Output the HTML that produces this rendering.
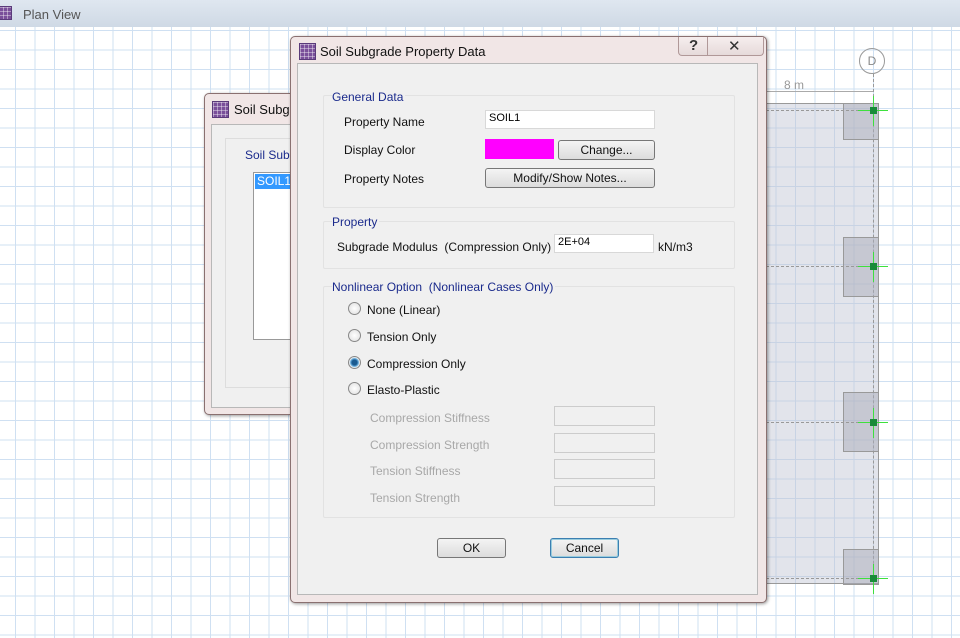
<!DOCTYPE html>
<html><head><meta charset="utf-8"><style>
*{margin:0;padding:0;box-sizing:border-box}
body{width:960px;height:638px;overflow:hidden;position:relative;font-family:"Liberation Sans",sans-serif;font-size:12px;background:#fff}
.grid{position:absolute;left:0;top:27px;width:960px;height:611px;
background-image:linear-gradient(to right,#cfe0f2 1px,transparent 1px),linear-gradient(to bottom,#cfe0f2 1px,transparent 1px);
background-size:19.5px 19.5px;background-position:15px -16.5px}
.tb{position:absolute;left:0;top:0;width:960px;height:27px;background:linear-gradient(#dfe7f0,#cfd9e5);color:#555;font-size:13px}
.ico{position:absolute;width:14px;height:14px;background:#7a4f9a;border:1px solid #5a3a7a;
background-image:linear-gradient(to right,rgba(255,255,255,.4) 1px,transparent 1px),linear-gradient(to bottom,rgba(255,255,255,.4) 1px,transparent 1px);background-size:4px 4px}
.abs{position:absolute;white-space:nowrap}
.dlg{position:absolute;background:#f1e6e6;border:1px solid #8a7070;border-radius:5px;box-shadow:1px 1px 3px rgba(0,0,0,.4);overflow:hidden}
.panel{position:absolute;background:#f0f0f0;border:1px solid #b8b8b8}
.grp{position:absolute;border:1px solid #e2e2e2;border-radius:2px}
.gl{position:absolute;color:#1a2a8c;font-size:12px;background:#f0f0f0;padding-right:2px;white-space:nowrap}
.lbl{position:absolute;color:#111;font-size:12px;white-space:nowrap}
.dis{position:absolute;color:#a8a8a8;font-size:12px;white-space:nowrap}
.inp{position:absolute;background:#fff;border:1px solid #d8d8d8;font-size:11px;padding:1px 3px}
.dinp{position:absolute;background:#f0f0f0;border:1px solid #ccc}
.btn{position:absolute;border:1px solid #777;border-radius:3px;background:linear-gradient(#f4f4f4,#dcdcdc);text-align:center;font-size:12px;color:#111}
.rad{position:absolute;width:13px;height:13px;border-radius:50%;border:1px solid #888;background:radial-gradient(#fff,#ddd)}
.slab{position:absolute;left:766px;top:103px;width:113px;height:481px;background:rgba(190,195,210,.45);border:1px solid #999}
.col{position:absolute;left:843px;width:36px;background:rgba(170,172,185,.5);border:1px solid #999}
.g1{position:absolute;background:#3ee03e}
</style></head><body>
<div class="grid"></div>
<div class="tb"><div class="ico" style="left:-2px;top:6px"></div><span class="abs" style="left:23px;top:7px">Plan View</span></div>

<div class="slab"></div>
<div class="abs" style="left:766px;top:91px;width:108px;border-top:1px solid #aaa"></div>
<div class="abs" style="left:784px;top:78px;color:#999;font-size:12px">8 m</div>
<div class="abs" style="left:859px;top:48px;width:26px;height:26px;border:1px solid #999;border-radius:50%;text-align:center;line-height:24px;color:#888;font-size:12px">D</div>
<div class="abs" style="left:873px;top:74px;height:520px;border-left:1px dashed #999"></div>
<div class="col" style="top:103px;height:37px"></div>
<div class="col" style="top:237px;height:60px"></div>
<div class="col" style="top:392px;height:60px"></div>
<div class="col" style="top:549px;height:36px"></div>
<div class="abs" style="left:766px;top:422px;width:113px;border-top:1px dashed #999"></div>
<div class="abs" style="left:766px;top:578px;width:113px;border-top:1px dashed #999"></div>
<div class="abs" style="left:766px;top:110px;width:113px;border-top:1px dashed #999"></div>
<div class="abs" style="left:766px;top:266px;width:113px;border-top:1px dashed #999"></div>
<div class="g1" style="left:858px;top:110px;width:30px;height:1px"></div><div class="g1" style="left:873px;top:96px;width:1px;height:30px"></div><div class="abs" style="left:870px;top:107px;width:7px;height:7px;background:#1a8a3a"></div>
<div class="g1" style="left:858px;top:266px;width:30px;height:1px"></div><div class="g1" style="left:873px;top:252px;width:1px;height:30px"></div><div class="abs" style="left:870px;top:263px;width:7px;height:7px;background:#1a8a3a"></div>
<div class="g1" style="left:858px;top:422px;width:30px;height:1px"></div><div class="g1" style="left:873px;top:408px;width:1px;height:30px"></div><div class="abs" style="left:870px;top:419px;width:7px;height:7px;background:#1a8a3a"></div>
<div class="g1" style="left:858px;top:578px;width:30px;height:1px"></div><div class="g1" style="left:873px;top:564px;width:1px;height:30px"></div><div class="abs" style="left:870px;top:575px;width:7px;height:7px;background:#1a8a3a"></div>

<div class="dlg" style="left:204px;top:93px;width:100px;height:322px">
 <div class="ico" style="left:7px;top:7px;width:17px;height:17px"></div>
 <div class="abs" style="left:29px;top:8px;font-size:13px;color:#111">Soil Subgrade</div>
 <div class="panel" style="left:6px;top:30px;width:100px;height:284px"></div>
 <div class="abs" style="left:20px;top:44px;width:90px;height:250px;border:1px solid #ddd"></div>
 <div class="abs" style="left:40px;top:54px;color:#1a2a8c">Soil Subgrade</div>
 <div class="abs" style="left:48px;top:78px;width:60px;height:168px;background:#fff;border:1px solid #999"></div>
 <div class="abs" style="left:50px;top:80px;width:50px;height:15px;background:#3399ff;color:#fff;padding-left:2px">SOIL1</div>
</div>

<div class="dlg" style="left:290px;top:36px;width:477px;height:567px">
 <div class="ico" style="left:8px;top:6px;width:17px;height:17px"></div>
 <div class="abs" style="left:29px;top:7px;font-size:13px;color:#111">Soil Subgrade Property Data</div>
 <div class="abs" style="left:387px;top:0px;width:86px;height:19px;border:1px solid #b09898;border-top:none;border-radius:0 0 4px 4px;background:linear-gradient(#f6eeee,#e6dada)"></div>
 <div class="abs" style="left:416px;top:0;height:19px;border-left:1px solid #b09898"></div>
 <div class="abs" style="left:398px;top:0px;font-size:15px;color:#333;font-weight:bold">?</div>
 <div class="abs" style="left:437px;top:0px;font-size:15px;color:#333">✕</div>
 <div class="panel" style="left:6px;top:26px;width:461px;height:532px">
  <div class="grp" style="left:25px;top:31px;width:412px;height:113px"></div>
  <div class="gl" style="left:34px;top:26px">General Data</div>
  <div class="lbl" style="left:46px;top:51px">Property Name</div>
  <div class="inp" style="left:187px;top:46px;width:170px;height:19px">SOIL1</div>
  <div class="lbl" style="left:46px;top:79px">Display Color</div>
  <div class="abs" style="left:187px;top:75px;width:69px;height:20px;background:#ff00ff"></div>
  <div class="btn" style="left:260px;top:76px;width:97px;height:20px;line-height:18px">Change...</div>
  <div class="lbl" style="left:46px;top:108px">Property Notes</div>
  <div class="btn" style="left:187px;top:104px;width:170px;height:20px;line-height:18px">Modify/Show Notes...</div>

  <div class="grp" style="left:25px;top:157px;width:412px;height:48px"></div>
  <div class="gl" style="left:34px;top:151px">Property</div>
  <div class="lbl" style="left:39px;top:176px">Subgrade Modulus&nbsp; (Compression Only)</div>
  <div class="inp" style="left:256px;top:170px;width:100px;height:19px">2E+04</div>
  <div class="lbl" style="left:360px;top:176px">kN/m3</div>

  <div class="grp" style="left:25px;top:222px;width:412px;height:232px"></div>
  <div class="gl" style="left:34px;top:216px">Nonlinear Option&nbsp; (Nonlinear Cases Only)</div>
  <div class="rad" style="left:50px;top:238px"></div><div class="lbl" style="left:69px;top:239px">None (Linear)</div>
  <div class="rad" style="left:50px;top:265px"></div><div class="lbl" style="left:69px;top:266px">Tension Only</div>
  <div class="rad" style="left:50px;top:292px;background:radial-gradient(#1a5a90 2.5px,#6ab0e0 4px,#eee 5px)"></div><div class="lbl" style="left:69px;top:293px">Compression Only</div>
  <div class="rad" style="left:50px;top:318px"></div><div class="lbl" style="left:69px;top:319px">Elasto-Plastic</div>
  <div class="dis" style="left:72px;top:347px">Compression Stiffness</div><div class="dinp" style="left:256px;top:342px;width:101px;height:20px"></div>
  <div class="dis" style="left:72px;top:374px">Compression Strength</div><div class="dinp" style="left:256px;top:369px;width:101px;height:20px"></div>
  <div class="dis" style="left:72px;top:400px">Tension Stiffness</div><div class="dinp" style="left:256px;top:395px;width:101px;height:20px"></div>
  <div class="dis" style="left:72px;top:427px">Tension Strength</div><div class="dinp" style="left:256px;top:422px;width:101px;height:20px"></div>

  <div class="btn" style="left:139px;top:474px;width:69px;height:20px;line-height:18px">OK</div>
  <div class="btn" style="left:252px;top:474px;width:69px;height:20px;line-height:18px;border-color:#3c7fb1;box-shadow:inset 0 0 0 1px #9cd">Cancel</div>
 </div>
</div>
</body></html>
